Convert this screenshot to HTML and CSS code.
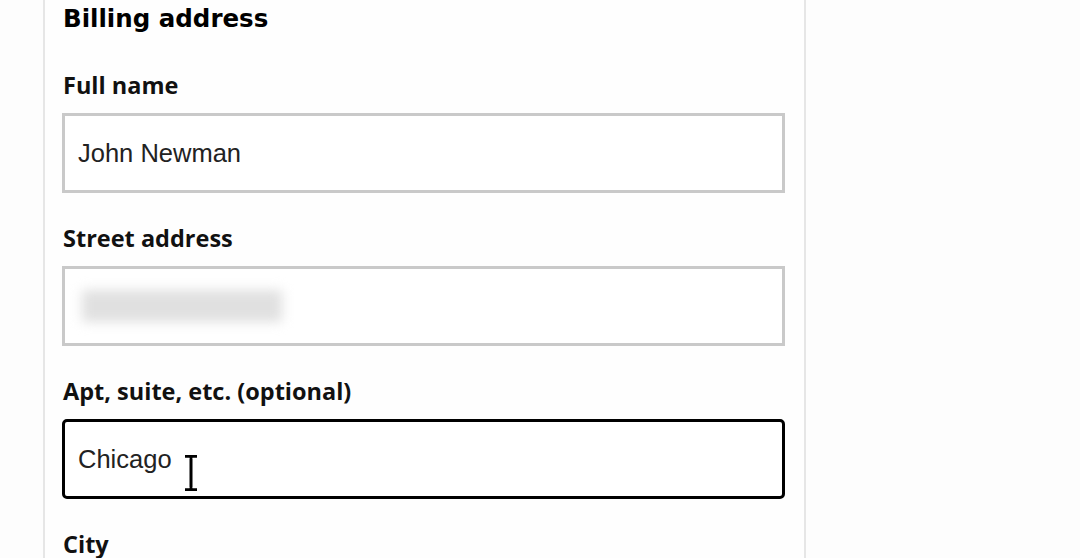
FILE: index.html
```html
<!DOCTYPE html>
<html lang="en">
<head>
<meta charset="utf-8">
<title>Billing address</title>
<link rel="stylesheet" href="styles.css">
</head>
<body>
<main class="panel">
  <h2 class="heading">Billing address</h2>
  <div class="field">
    <label class="label">Full name</label>
    <div class="input"><span class="value">John Newman</span></div>
  </div>
  <div class="field">
    <label class="label">Street address</label>
    <div class="input"><span class="blurred"></span></div>
  </div>
  <div class="field">
    <label class="label">Apt, suite, etc. (optional)</label>
    <div class="input focused"><span class="value">Chicago</span>
      <svg class="ibeam" width="16" height="38" viewBox="0 0 16 38">
        <path d="M2 2.5 H14 M8 2.5 V35.5 M2 35.5 H14" stroke="#000" stroke-width="3" fill="none"/>
        <path d="M2 4.2 H6.5 M9.5 4.2 H14 M2 33.8 H6.5 M9.5 33.8 H14" stroke="#fff" stroke-width="0.8" fill="none"/>
      </svg>
    </div>
  </div>
  <div class="field">
    <label class="label">City</label>
  </div>
</main>
</body>
</html>
```
FILE: styles.css
```css
html, body {
  margin: 0;
  padding: 0;
  background: #fdfdfd;
  height: 100%;
  overflow: hidden;
}
.panel {
  margin-left: 43px;
  width: 741px;
  min-height: 100%;
  border-left: 2px solid #e6e6e6;
  border-right: 2px solid #e6e6e6;
  background: #fefefe;
  padding: 5px 0 0 18px;
  box-sizing: content-box;
}
.heading {
  margin: 0;
  font-family: "DejaVu Sans", sans-serif;
  font-weight: 700;
  font-size: 24.5px;
  line-height: 28px;
  color: #000;
}
.field {
  display: flex;
  flex-direction: column;
  align-items: flex-start;
  margin-top: 38px;
}
.field + .field {
  margin-top: 31px;
}
.label {
  font-family: "Open Sans", sans-serif;
  font-weight: 700;
  font-size: 23.5px;
  line-height: 28px;
  color: #111;
  margin-bottom: 14px;
}
.input {
  position: relative;
  box-sizing: border-box;
  width: 723px;
  height: 80px;
  margin-left: -1px;
  border: 3px solid #c9c9c9;
  background: #fff;
  padding-left: 13px;
  display: flex;
  align-items: center;
}
.input.focused {
  border-color: #000;
  border-radius: 5px;
}
.value {
  font-family: "Liberation Sans", Arial, sans-serif;
  font-size: 25.5px;
  color: #222;
}
.blurred {
  display: block;
  width: 200px;
  height: 32px;
  background: #e0e0e0;
  filter: blur(6px);
  margin-left: 4px;
}
.ibeam {
  position: absolute;
  left: 118px;
  top: 32px;
}
```
